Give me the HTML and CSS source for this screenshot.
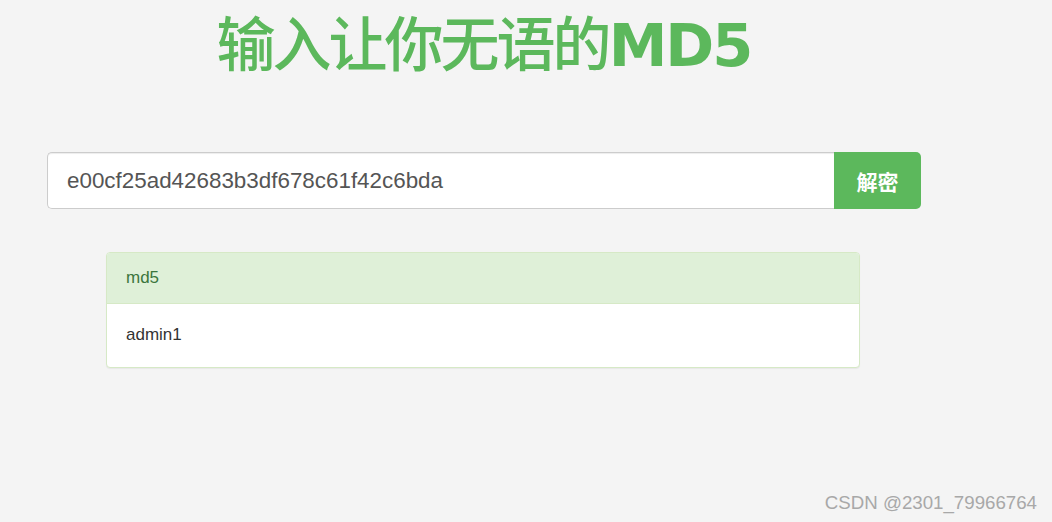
FILE: index.html
```html
<!DOCTYPE html>
<html lang="zh-CN">
<head>
    <meta charset="UTF-8">
    <meta name="viewport" content="width=device-width, initial-scale=1.0">
    <title>输入让你无语的MD5</title>
    <link rel="stylesheet" href="styles.css">
</head>
<body>
    <div class="container">
        <h1 class="title">输入让你无语的<span class="latin">MD5</span></h1>
        <form class="search-form">
            <div class="input-group">
                <input type="text" class="form-control" name="md5" value="e00cf25ad42683b3df678c61f42c6bda">
                <button type="submit" class="btn-decrypt">解密</button>
            </div>
        </form>
        <div class="panel">
            <div class="panel-heading">md5</div>
            <div class="panel-body">admin1</div>
        </div>
    </div>
    <div class="watermark">CSDN @2301_79966764</div>
</body>
</html>
```

FILE: styles.css
```css
html, body {
    height: 100%;
}
body {
    margin: 0;
    background-color: #f4f4f4;
    font-family: "Liberation Sans", Arial, "Noto Sans CJK SC", sans-serif;
    color: #333;
    position: relative;
    overflow: hidden;
}
.container {
    width: 874px;
    margin-left: 47px;
}
.title {
    margin: 6px 0 0;
    height: 70px;
    text-align: center;
    font-family: "Noto Sans CJK SC", sans-serif;
    font-size: 59px;
    line-height: 70px;
    letter-spacing: -3px;
    font-weight: 500;
    color: #5cb85c;
    white-space: nowrap;
}
.title .latin {
    font-family: "DejaVu Sans", sans-serif;
    font-size: 59px;
    font-weight: 700;
    line-height: 1;
    letter-spacing: -2px;
}
.search-form {
    margin-top: 76px;
}
.input-group {
    display: flex;
    height: 57px;
}
.form-control {
    flex: 1;
    margin: 0;
    padding: 0 19px;
    border: 1px solid #ccc;
    border-right: none;
    border-radius: 5px 0 0 5px;
    background: #fff;
    font-family: "Liberation Sans", Arial, sans-serif;
    font-size: 22.4px;
    color: #555;
    box-shadow: inset 0 1px 1px rgba(0, 0, 0, 0.075);
    outline: none;
}
.btn-decrypt {
    width: 87px;
    border: none;
    border-radius: 0 5px 5px 0;
    background-color: #5cb85c;
    color: #fff;
    font-family: "Noto Sans CJK SC", sans-serif;
    font-size: 21px;
    font-weight: 700;
    cursor: pointer;
}
.panel {
    margin: 43px 61px 0 59px;
    background: #fff;
    border: 1px solid #d6e9c6;
    border-radius: 4px;
    box-shadow: 0 1px 1px rgba(0, 0, 0, 0.05);
}
.panel-heading {
    padding: 14px 19px;
    background-color: #dff0d8;
    border-bottom: 1px solid #d6e9c6;
    border-radius: 3px 3px 0 0;
    color: #3c763d;
    font-size: 17px;
    line-height: 22px;
}
.panel-body {
    padding: 20px 19px 21px;
    font-size: 17px;
    line-height: 22px;
}
.watermark {
    position: absolute;
    right: 15px;
    bottom: 8px;
    font-size: 18.7px;
    color: #a8a8a8;
}
```
